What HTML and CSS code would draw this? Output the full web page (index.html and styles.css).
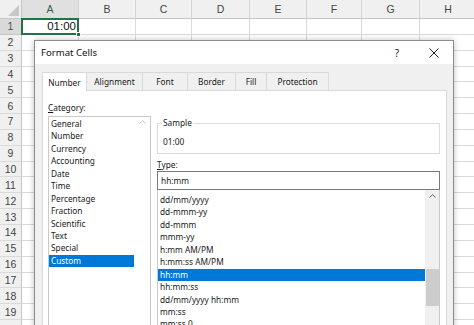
FILE: index.html
```html
<!DOCTYPE html>
<html>
<head>
<meta charset="utf-8">
<link rel="stylesheet" href="styles.css">
</head>
<body>
<div class="sheet">
  <div class="row head">
    <div class="rh corner"><svg class="tri" width="22" height="19" viewBox="0 0 22 19"><polygon points="19,5 19,16 8,16" fill="#c8c8c8"/></svg></div>
    <div class="ch sel">A</div><div class="ch">B</div><div class="ch">C</div><div class="ch">D</div><div class="ch">E</div><div class="ch">F</div><div class="ch">G</div><div class="ch">H</div>
  </div>
  <div class="row"><div class="rh sel">1</div><div class="c a1">01:00<span class="handle"></span></div><div class="c"></div><div class="c"></div><div class="c"></div><div class="c"></div><div class="c"></div><div class="c"></div><div class="c"></div></div>
  <div class="row"><div class="rh">2</div><div class="c"></div><div class="c"></div><div class="c"></div><div class="c"></div><div class="c"></div><div class="c"></div><div class="c"></div><div class="c"></div></div>
  <div class="row"><div class="rh">3</div><div class="c"></div><div class="c"></div><div class="c"></div><div class="c"></div><div class="c"></div><div class="c"></div><div class="c"></div><div class="c"></div></div>
  <div class="row"><div class="rh">4</div><div class="c"></div><div class="c"></div><div class="c"></div><div class="c"></div><div class="c"></div><div class="c"></div><div class="c"></div><div class="c"></div></div>
  <div class="row"><div class="rh">5</div><div class="c"></div><div class="c"></div><div class="c"></div><div class="c"></div><div class="c"></div><div class="c"></div><div class="c"></div><div class="c"></div></div>
  <div class="row"><div class="rh">6</div><div class="c"></div><div class="c"></div><div class="c"></div><div class="c"></div><div class="c"></div><div class="c"></div><div class="c"></div><div class="c"></div></div>
  <div class="row"><div class="rh">7</div><div class="c"></div><div class="c"></div><div class="c"></div><div class="c"></div><div class="c"></div><div class="c"></div><div class="c"></div><div class="c"></div></div>
  <div class="row"><div class="rh">8</div><div class="c"></div><div class="c"></div><div class="c"></div><div class="c"></div><div class="c"></div><div class="c"></div><div class="c"></div><div class="c"></div></div>
  <div class="row"><div class="rh">9</div><div class="c"></div><div class="c"></div><div class="c"></div><div class="c"></div><div class="c"></div><div class="c"></div><div class="c"></div><div class="c"></div></div>
  <div class="row"><div class="rh">10</div><div class="c"></div><div class="c"></div><div class="c"></div><div class="c"></div><div class="c"></div><div class="c"></div><div class="c"></div><div class="c"></div></div>
  <div class="row"><div class="rh">11</div><div class="c"></div><div class="c"></div><div class="c"></div><div class="c"></div><div class="c"></div><div class="c"></div><div class="c"></div><div class="c"></div></div>
  <div class="row"><div class="rh">12</div><div class="c"></div><div class="c"></div><div class="c"></div><div class="c"></div><div class="c"></div><div class="c"></div><div class="c"></div><div class="c"></div></div>
  <div class="row"><div class="rh">13</div><div class="c"></div><div class="c"></div><div class="c"></div><div class="c"></div><div class="c"></div><div class="c"></div><div class="c"></div><div class="c"></div></div>
  <div class="row"><div class="rh">14</div><div class="c"></div><div class="c"></div><div class="c"></div><div class="c"></div><div class="c"></div><div class="c"></div><div class="c"></div><div class="c"></div></div>
  <div class="row"><div class="rh">15</div><div class="c"></div><div class="c"></div><div class="c"></div><div class="c"></div><div class="c"></div><div class="c"></div><div class="c"></div><div class="c"></div></div>
  <div class="row"><div class="rh">16</div><div class="c"></div><div class="c"></div><div class="c"></div><div class="c"></div><div class="c"></div><div class="c"></div><div class="c"></div><div class="c"></div></div>
  <div class="row"><div class="rh">17</div><div class="c"></div><div class="c"></div><div class="c"></div><div class="c"></div><div class="c"></div><div class="c"></div><div class="c"></div><div class="c"></div></div>
  <div class="row"><div class="rh">18</div><div class="c"></div><div class="c"></div><div class="c"></div><div class="c"></div><div class="c"></div><div class="c"></div><div class="c"></div><div class="c"></div></div>
  <div class="row"><div class="rh">19</div><div class="c"></div><div class="c"></div><div class="c"></div><div class="c"></div><div class="c"></div><div class="c"></div><div class="c"></div><div class="c"></div></div>
  <div class="row"><div class="rh"></div><div class="c"></div><div class="c"></div><div class="c"></div><div class="c"></div><div class="c"></div><div class="c"></div><div class="c"></div><div class="c"></div></div>
</div>

<div class="dialog">
  <div class="titlebar">
    <span class="title">Format Cells</span>
    <span class="help">?</span>
    <span class="close"><svg width="10" height="10" viewBox="0 0 10 10"><path d="M0.5 0.5 L9.5 9.5 M9.5 0.5 L0.5 9.5" stroke="#222" stroke-width="1"/></svg></span>
  </div>
  <div class="dbody">
    <div class="tabs">
      <div class="tab active">Number</div>
      <div class="tab">Alignment</div>
      <div class="tab">Font</div>
      <div class="tab">Border</div>
      <div class="tab">Fill</div>
      <div class="tab">Protection</div>
    </div>
    <div class="panel">
      <div class="leftcol">
        <div class="label"><u>C</u>ategory:</div>
        <div class="listbox cat">
          <ul class="items">
            <li>General</li>
            <li>Number</li>
            <li>Currency</li>
            <li>Accounting</li>
            <li>Date</li>
            <li>Time</li>
            <li>Percentage</li>
            <li>Fraction</li>
            <li>Scientific</li>
            <li>Text</li>
            <li>Special</li>
            <li class="selected">Custom</li>
          </ul>
          <div class="vscroll off">
            <svg class="arrow" width="7" height="4" viewBox="0 0 7 4"><path d="M0.5 3.5 L3.5 0.7 L6.5 3.5" fill="none" stroke="#c4c4c4" stroke-width="1"/></svg>
          </div>
        </div>
      </div>
      <div class="rightcol">
        <fieldset class="sample">
          <legend>Sample</legend>
          <div class="sample-val">01:00</div>
        </fieldset>
        <div class="label type-label"><u>T</u>ype:</div>
        <div class="input">hh:mm</div>
        <div class="listbox types">
          <ul class="items">
            <li>dd/mm/yyyy</li>
            <li>dd-mmm-yy</li>
            <li>dd-mmm</li>
            <li>mmm-yy</li>
            <li>h:mm AM/PM</li>
            <li>h:mm:ss AM/PM</li>
            <li class="selected">hh:mm</li>
            <li>hh:mm:ss</li>
            <li>dd/mm/yyyy hh:mm</li>
            <li>mm:ss</li>
            <li>mm:ss.0</li>
          </ul>
          <div class="vscroll on">
            <svg class="arrow" width="7" height="4" viewBox="0 0 7 4"><path d="M0.5 3.5 L3.5 0.7 L6.5 3.5" fill="none" stroke="#606060" stroke-width="1"/></svg>
            <div class="thumb"></div>
          </div>
        </div>
      </div>
    </div>
  </div>
</div>
</body>
</html>
```

FILE: styles.css
```css
html, body {
  margin: 0;
  padding: 0;
}
body {
  width: 474px;
  height: 325px;
  overflow: hidden;
  position: relative;
  background: #fff;
  font-family: "Noto Sans", "Open Sans", sans-serif;
}

/* ---------- spreadsheet ---------- */
.sheet {
  display: flex;
  flex-direction: column;
}
.row {
  display: grid;
  grid-template-columns: 22px 57px 57px 56px 58px 57px 55px 58px 57px;
  height: 15.85px;
}
.row.head {
  height: 19px;
}
.rh {
  background: #f0f0f0;
  border-right: 1px solid #c6c6c6;
  border-bottom: 1px solid #dadada;
  box-sizing: border-box;
  color: #444;
  font-family: "Liberation Sans", sans-serif;
  font-size: 10.5px;
  display: flex;
  align-items: center;
  justify-content: center;
}
.rh.sel {
  background: #d9d9d9;
  color: #3d5a48;
  border-bottom-color: #c6c6c6;
}
.rh.corner {
  background: #f0f0f0;
  border-bottom: 1px solid #c6c6c6;
  position: relative;
}
.tri {
  position: absolute;
  left: 0;
  top: 0;
}
.ch {
  background: #f0f0f0;
  border-right: 1px solid #d4d4d4;
  border-bottom: 1px solid #c6c6c6;
  box-sizing: border-box;
  color: #444;
  font-family: "Liberation Sans", sans-serif;
  font-size: 10.5px;
  display: flex;
  align-items: center;
  justify-content: center;
}
.ch.sel {
  background: #e0e0e0;
  color: #3d5a48;
  border-bottom-color: #9fb5a8;
}
.c {
  border-right: 1px solid #dadada;
  border-bottom: 1px solid #dadada;
  box-sizing: border-box;
}
.c.a1 {
  border: 2px solid #217346;
  position: relative;
  margin: -1px 0 0 -1px;
  font-family: "Liberation Sans", sans-serif;
  font-size: 11.5px;
  color: #111;
  display: flex;
  align-items: center;
  justify-content: flex-end;
  padding-right: 1px;
}
.handle {
  position: absolute;
  right: -4px;
  bottom: -4px;
  width: 5px;
  height: 5px;
  background: #217346;
  border: 1px solid #fff;
  box-sizing: border-box;
}

/* ---------- dialog ---------- */
.dialog {
  position: absolute;
  left: 34px;
  top: 40px;
  width: 420px;
  height: 300px;
  border: 1px solid #8c8c8c;
  box-sizing: border-box;
  background: #f0f0f0;
  box-shadow: 0 0 6px rgba(0,0,0,0.25);
  display: flex;
  flex-direction: column;
  color: #1a1a1a;
  font-size: 8.3px;
}
.titlebar {
  height: 23px;
  background: #fff;
  display: flex;
  align-items: center;
  padding-left: 6px;
  flex-shrink: 0;
}
.title {
  font-size: 9.6px;
  flex: 1;
  color: #111;
}
.help {
  font-size: 10px;
  width: 14px;
  text-align: center;
  margin-right: 25px;
  color: #222;
}
.close {
  display: flex;
  margin-right: 14px;
}
.dbody {
  flex: 1;
  padding: 8px 6px 0 7px;
  display: flex;
  flex-direction: column;
}
.tabs {
  display: flex;
  height: 18px;
  position: relative;
  z-index: 1;
}
.tab {
  border: 1px solid #d9d9d9;
  border-bottom: none;
  margin-right: -1px;
  background: #f0f0f0;
  display: flex;
  align-items: center;
  justify-content: center;
  box-sizing: border-box;
  height: 18px;
}
.tab:nth-child(1) { width: 45px; }
.tab:nth-child(2) { width: 57px; }
.tab:nth-child(3) { width: 46px; }
.tab:nth-child(4) { width: 49px; }
.tab:nth-child(5) { width: 32px; }
.tab:nth-child(6) { width: 63px; }
.tab.active {
  background: #fff;
  height: 19px;
}
.panel {
  flex: 1;
  background: #fff;
  border: 1px solid #d9d9d9;
  display: flex;
  gap: 6px;
  padding: 10px 5px 0 5px;
}
.label {
  height: 13px;
  line-height: 13px;
}
.leftcol {
  width: 103px;
  display: flex;
  flex-direction: column;
}
.leftcol .label {
  margin-bottom: 2px;
}
.listbox {
  border: 1px solid #c9c9c9;
  display: flex;
  flex: 1;
  overflow: hidden;
}
.items {
  list-style: none;
  margin: 0;
  padding: 1px 0 0 0;
  flex: 1;
}
.items li {
  height: 12.45px;
  line-height: 12.45px;
  padding-left: 2px;
  white-space: nowrap;
}
.items li.selected {
  background: #0078d7;
  color: #fff;
}
.vscroll {
  width: 16px;
  display: flex;
  flex-direction: column;
  align-items: center;
}
.vscroll .arrow {
  margin-top: 4px;
}
.vscroll.off .arrow {
  margin-top: 3px;
}
.vscroll.on {
  width: 14px;
  background: #f0f0f0;
}
.thumb {
  width: 13px;
  height: 37px;
  background: #cdcdcd;
  margin-top: 71px;
}
.rightcol {
  flex: 1;
  display: flex;
  flex-direction: column;
  margin-right: 1px;
  margin-top: 17px;
}
.sample {
  margin: 0;
  padding: 0 5px 0 5px;
  border: 1px solid #dcdcdc;
  height: 36px;
  box-sizing: border-box;
}
.sample legend {
  padding: 0 1px;
  margin-left: -1px;
  line-height: 10px;
}
.sample-val {
  margin-top: 8px;
}
.type-label {
  margin-top: 4px;
  margin-bottom: 0;
}
.input {
  height: 19px;
  border: 1px solid #7a7a7a;
  box-sizing: border-box;
  padding-left: 3px;
  display: flex;
  align-items: center;
}
.listbox.types {
  border-color: #c9c9c9;
  border-top: none;
}
.types .items {
  padding-top: 4px;
}
```
